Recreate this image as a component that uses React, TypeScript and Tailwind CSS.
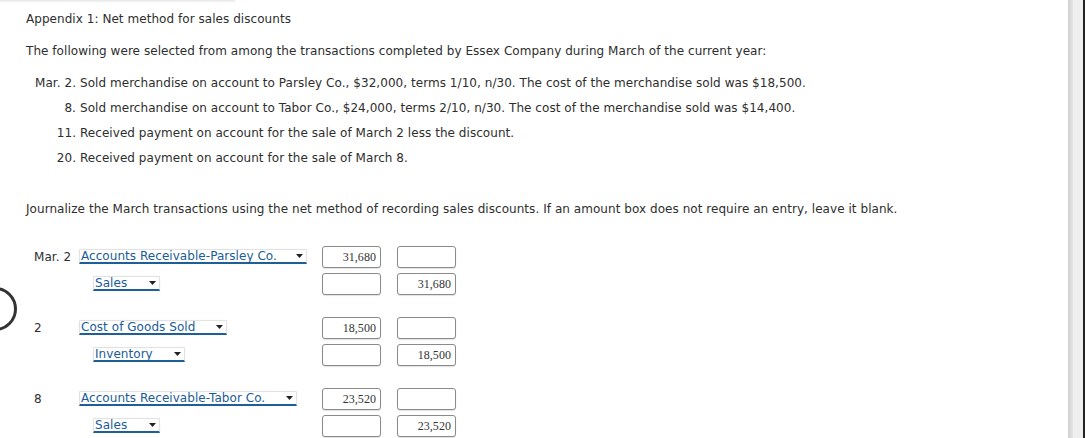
const transactions = [
  { label: "Mar. 2.", text: "Sold merchandise on account to Parsley Co., $32,000, terms 1/10, n/30. The cost of the merchandise sold was $18,500." },
  { label: "8.", text: "Sold merchandise on account to Tabor Co., $24,000, terms 2/10, n/30. The cost of the merchandise sold was $14,400." },
  { label: "11.", text: "Received payment on account for the sale of March 2 less the discount." },
  { label: "20.", text: "Received payment on account for the sale of March 8." },
];

type Line = { account: string; width: string; credit?: boolean; debit?: string; creditAmt?: string };

const entries: { date: string; lines: Line[] }[] = [
  {
    date: "Mar. 2",
    lines: [
      { account: "Accounts Receivable-Parsley Co.", width: "w-[228px]", debit: "31,680" },
      { account: "Sales", width: "w-[67px]", credit: true, creditAmt: "31,680" },
    ],
  },
  {
    date: "2",
    lines: [
      { account: "Cost of Goods Sold", width: "w-[148px]", debit: "18,500" },
      { account: "Inventory", width: "w-[92px]", credit: true, creditAmt: "18,500" },
    ],
  },
  {
    date: "8",
    lines: [
      { account: "Accounts Receivable-Tabor Co.", width: "w-[218px]", debit: "23,520" },
      { account: "Sales", width: "w-[67px]", credit: true, creditAmt: "23,520" },
    ],
  },
];

function AccountSelect({ label, width }: { label: string; width: string }) {
  return (
    <div
      className={`${width} h-[15px] flex items-center justify-between bg-white border-x border-t border-[#e2e2e2] border-b-2 border-b-[#1f5f98] rounded-t-[2px] shadow-[0_0_1px_rgba(0,0,0,0.15)]`}
    >
      <span className="text-[12px] leading-[13px] text-[#1a5c97] pl-px">{label}</span>
      <svg width="7" height="4" viewBox="0 0 7 4" className="mr-[3px]">
        <path d="M0 0h7L3.5 4z" fill="#222" />
      </svg>
    </div>
  );
}

function AmountBox({ value }: { value?: string }) {
  return (
    <div className="w-[59px] h-[22px] border border-[#8a8a8a] rounded-[3px] bg-white flex items-center justify-end pr-[4px] shadow-[0_1px_1px_rgba(0,0,0,0.12)]">
      <span className="text-[12px] text-[#333]" style={{ fontFamily: '"Liberation Serif", serif' }}>
        {value}
      </span>
    </div>
  );
}

export default function App() {
  return (
    <div className="w-[1085px] h-[438px] flex overflow-hidden bg-white text-[#2e2e2e]" style={{ fontFamily: '"DejaVu Sans", Verdana, sans-serif' }}>
      <div className="relative flex-1 pt-[11px] pl-[26px] text-[12px] tracking-[0.05px]">
        <div className="absolute top-0 left-0 w-[235px] h-[3px] bg-gradient-to-b from-[#e6e6e6] to-white" />
        <div className="absolute left-[-27px] top-[287px] w-[44px] h-[44px] rounded-full border-[3px] border-[#333]" />

        <p className="leading-[16px]">Appendix 1: Net method for sales discounts</p>
        <p className="mt-[16px] leading-[16px]">
          The following were selected from among the transactions completed by Essex Company during March of the current year:
        </p>

        <div className="mt-[11px]">
          {transactions.map((t) => (
            <div key={t.label} className="h-[25px] flex items-center gap-[4px]">
              <span className="w-[50px] text-right">{t.label}</span>
              <span>{t.text}</span>
            </div>
          ))}
        </div>

        <p className="mt-[31px] leading-[16px]">
          Journalize the March transactions using the net method of recording sales discounts. If an amount box does not require an entry, leave it blank.
        </p>

        <div className="mt-[26px] pl-[8px] flex flex-col gap-[17px]">
          {entries.map((e) => (
            <div key={e.date + e.lines[0].account}>
              {e.lines.map((l, i) => (
                <div key={l.account} className="h-[27px] flex items-center">
                  <div className="w-[45px]">{i === 0 ? e.date : ""}</div>
                  <div className={`w-[243px] ${l.credit ? "pl-[14px]" : ""}`}>
                    <AccountSelect label={l.account} width={l.width} />
                  </div>
                  <div className="flex gap-[16px]">
                    <AmountBox value={l.debit} />
                    <AmountBox value={l.creditAmt} />
                  </div>
                </div>
              ))}
            </div>
          ))}
        </div>
      </div>
      <div className="w-[15px] h-full flex">
        <div className="w-[5px] bg-gradient-to-r from-[#cfcfcf] to-[#e6e6e6]" />
        <div className="flex-1 bg-[#efefef]" />
      </div>
      <div className="w-[2px] h-full bg-[#222]" />
    </div>
  );
}
